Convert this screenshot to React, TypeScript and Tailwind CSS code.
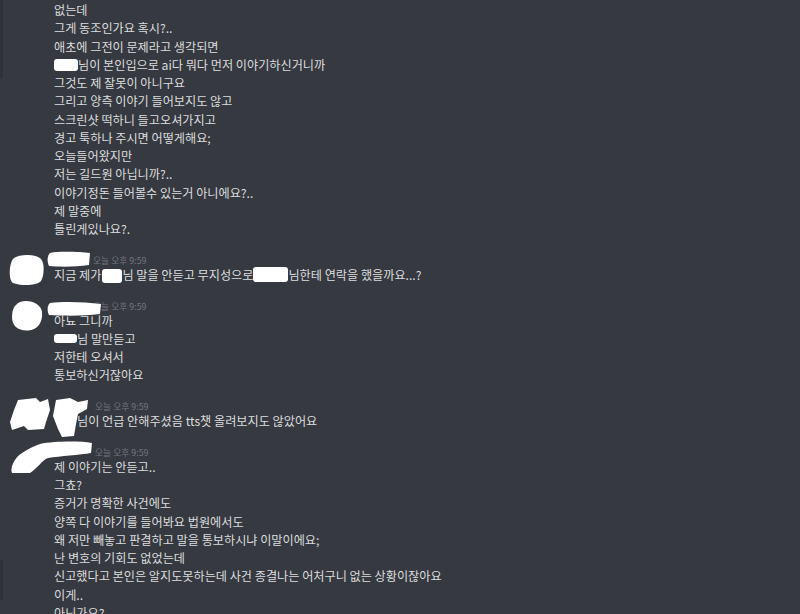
import React from "react";

const Blob = ({ w, h, cls = "" }: { w: number; h: number; cls?: string }) => (
  <span
    className={`inline-block bg-white rounded-[3px] align-middle ${cls}`}
    style={{ width: w, height: h }}
  />
);

const Line = ({ children }: { children: React.ReactNode }) => (
  <div className="h-[18.25px] leading-[18.25px] whitespace-nowrap">{children}</div>
);

const Header = ({ nameW, gap }: { nameW: number; gap: number }) => (
  <div className="h-[10px] flex items-center -ml-[6px] whitespace-nowrap">
    <span className="inline-block" style={{ width: nameW, marginRight: gap }} />
    <span className="text-[8.8px] leading-[10px] text-[#72767d]">오늘 오후 9:59</span>
  </div>
);

export default function App() {
  const group1 = [
    "없는데",
    "그게 동조인가요 혹시?..",
    "애초에 그전이 문제라고 생각되면",
    null,
    "그것도 제 잘못이 아니구요",
    "그리고 양측 이야기 들어보지도 않고",
    "스크린샷 떡하니 들고오셔가지고",
    "경고 툭하나 주시면 어떻게해요;",
    "오늘들어왔지만",
    "저는 길드원 아닙니까?..",
    "이야기정돈 들어볼수 있는거 아니에요?..",
    "제 말중에",
    "틀린게있나요?.",
  ];
  const group5 = [
    "제 이야기는 안듣고..",
    "그쵸?",
    "증거가 명확한 사건에도",
    "양쪽 다 이야기를 들어봐요 법원에서도",
    "왜 저만 빼놓고 판결하고 말을 통보하시냐 이말이에요;",
    "난 변호의 기회도 없었는데",
    "신고했다고 본인은 알지도못하는데 사건 종결나는 어처구니 없는 상황이잖아요",
    "이게..",
    "아닌가요?",
  ];
  return (
    <div
      className="relative w-[800px] h-[614px] overflow-hidden bg-[#36393f] text-[#dcddde] text-[12.15px]"
      style={{ fontFamily: '"Noto Sans CJK KR", "Noto Sans", sans-serif' }}
    >
      <div className="absolute left-0 top-0 w-[3px] h-[78px] bg-[#2f3136]" />
      <div className="absolute left-0 top-[560px] w-[3px] h-[40px] bg-[#2f3136]" />

      <div className="flex flex-col pt-[1px]">
        {/* group 1 */}
        <div className="pl-[54px]">
          {group1.map((t, i) =>
            t === null ? (
              <Line key={i}>
                <Blob w={24} h={12} cls="-mt-[3px]" />
                님이 본인입으로 ai다 뭐다 먼저 이야기하신거니까
              </Line>
            ) : (
              <Line key={i}>{t}</Line>
            )
          )}
        </div>

        {/* group 2 */}
        <div className="relative pl-[54px] mt-[17.5px]">
          <Header nameW={42} gap={3} />
          <Line>
            지금 제가
            <Blob w={20} h={14} cls="ml-[1px]" />
            님 말을 안듣고 무지성으로
            <Blob w={35} h={15} cls="-mt-[3px]" />
            님한테 연락을 했을까요...?
          </Line>
          <svg className="absolute left-0 top-0 overflow-visible" width="110" height="40">
            <path
              d="M14,2 C20,-2 36,-2 41,3 C45,8 44,20 41,25 C37,30 20,30 13,27 C8,24 9,6 14,2 Z"
              fill="white"
            />
            <path
              d="M50,-3 C60,-5 80,-4 90,-3 L89,9 C75,11 60,11 49,10 C47,6 47,0 50,-3 Z"
              fill="white"
            />
          </svg>
        </div>

        {/* group 3 */}
        <div className="relative pl-[54px] mt-[17.5px]">
          <Header nameW={42} gap={3} />
          <Line>아뇨 그니까</Line>
          <Line>
            <Blob w={23} h={9} cls="-mt-[3px]" />
            님 말만듣고
          </Line>
          <Line>저한테 오셔서</Line>
          <Line>통보하신거잖아요</Line>
          <svg className="absolute left-0 top-0 overflow-visible" width="110" height="40">
            <path
              d="M20,0 C30,-3 41,2 42,10 C43,20 38,28 28,28.5 C18,29 12,24 12,15 C12,8 14,3 20,0 Z"
              fill="white"
            />
            <path
              d="M50,1 C65,-1 85,0 101,2 L100,12 C85,14 65,14 49,13 C47,9 47,4 50,1 Z"
              fill="white"
            />
          </svg>
        </div>

        {/* group 4 */}
        <div className="relative pl-[54px] mt-[17.5px]">
          <Header nameW={44} gap={3} />
          <Line>
            <span className="inline-block w-[23px]" />
            님이 언급 안해주셨음 tts챗 올려보지도 않았어요
          </Line>
          <svg className="absolute left-0 top-0 overflow-visible" width="110" height="40">
            <path
              d="M18,-2 L36,-4 L40,0 L48,-3 L50,8 L46,20 L44,27 L28,28 L24,24 L12,28 L10,20 L14,8 Z"
              fill="white"
            />
            <path
              d="M56,-2 L70,-4 L78,0 L88,-2 L87,7 L78,12 L76,22 L74,34 L62,35 L58,27 L53,14 Z"
              fill="white"
            />
          </svg>
        </div>

        {/* group 5 */}
        <div className="relative pl-[54px] mt-[17.5px]">
          <Header nameW={44} gap={3} />
          {group5.map((t, i) => (
            <Line key={i}>{t}</Line>
          ))}
          <svg className="absolute left-0 top-0 overflow-visible" width="110" height="40">
            <path
              d="M40,-4 C55,-7 80,-7 92,-5 L91,5 C80,7 60,8 48,10 C42,12 38,20 30,25 L12,25 C10,20 14,10 22,5 C28,1 34,-2 40,-4 Z"
              fill="white"
            />
          </svg>
        </div>
      </div>
    </div>
  );
}
